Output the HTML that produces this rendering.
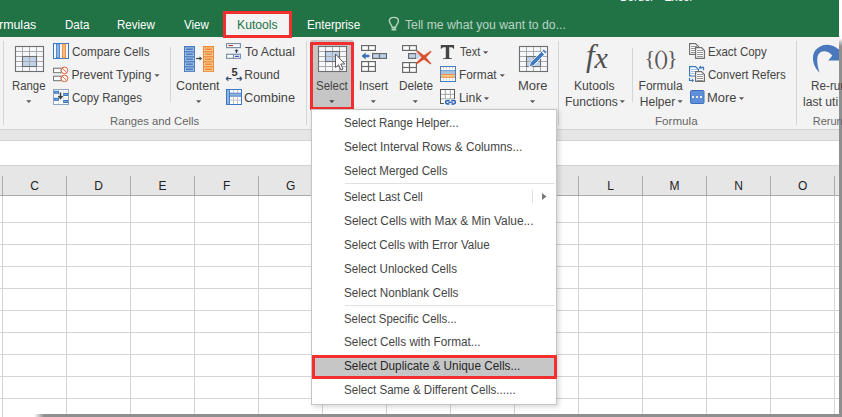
<!DOCTYPE html>
<html><head><meta charset="utf-8">
<style>
*{margin:0;padding:0;box-sizing:border-box}
html,body{width:842px;height:417px;overflow:hidden;background:#fff;font-family:"Liberation Sans",sans-serif}
.t{position:absolute;white-space:nowrap;line-height:1;transform-origin:0 0}
.b{position:absolute}
svg{position:absolute;overflow:visible}

</style></head><body>
<div class="b" style="left:0;top:0;width:839px;height:37px;background:#217346"></div>
<div class="b" style="left:839px;top:0;width:3px;height:417px;background:linear-gradient(#fff 0,#fff 38px,#8f8f8f 46px,#8f8f8f 100%)"></div>
<div class="b" style="left:223px;top:11px;width:69px;height:27px;background:#f3f3f3;border:3px solid #f32e2e;z-index:3"></div>
<div class="b" style="left:0;top:37px;width:839px;height:93px;background:#f3f3f3;border-bottom:1px solid #d2d2d2"></div>
<div class="b" style="left:0;top:130px;width:839px;height:11px;background:#e6e6e6;border-bottom:1px solid #d2d2d2"></div>
<div class="b" style="left:0;top:141px;width:839px;height:25px;background:#fff;border-bottom:1px solid #d2d2d2"></div>
<div class="b" style="left:0;top:166px;width:839px;height:30px;background:#e6e6e6;border-bottom:1px solid #ababab"></div>
<div class="b" style="left:2px;top:176px;width:1px;height:20px;background:#ababab"></div>
<div class="b" style="left:2px;top:196px;width:1px;height:221px;background:#d4d4d4"></div>
<div class="b" style="left:66px;top:176px;width:1px;height:20px;background:#ababab"></div>
<div class="b" style="left:66px;top:196px;width:1px;height:221px;background:#d4d4d4"></div>
<div class="b" style="left:130px;top:176px;width:1px;height:20px;background:#ababab"></div>
<div class="b" style="left:130px;top:196px;width:1px;height:221px;background:#d4d4d4"></div>
<div class="b" style="left:194px;top:176px;width:1px;height:20px;background:#ababab"></div>
<div class="b" style="left:194px;top:196px;width:1px;height:221px;background:#d4d4d4"></div>
<div class="b" style="left:258px;top:176px;width:1px;height:20px;background:#ababab"></div>
<div class="b" style="left:258px;top:196px;width:1px;height:221px;background:#d4d4d4"></div>
<div class="b" style="left:322px;top:176px;width:1px;height:20px;background:#ababab"></div>
<div class="b" style="left:322px;top:196px;width:1px;height:221px;background:#d4d4d4"></div>
<div class="b" style="left:386px;top:176px;width:1px;height:20px;background:#ababab"></div>
<div class="b" style="left:386px;top:196px;width:1px;height:221px;background:#d4d4d4"></div>
<div class="b" style="left:450px;top:176px;width:1px;height:20px;background:#ababab"></div>
<div class="b" style="left:450px;top:196px;width:1px;height:221px;background:#d4d4d4"></div>
<div class="b" style="left:514px;top:176px;width:1px;height:20px;background:#ababab"></div>
<div class="b" style="left:514px;top:196px;width:1px;height:221px;background:#d4d4d4"></div>
<div class="b" style="left:578px;top:176px;width:1px;height:20px;background:#ababab"></div>
<div class="b" style="left:578px;top:196px;width:1px;height:221px;background:#d4d4d4"></div>
<div class="b" style="left:642px;top:176px;width:1px;height:20px;background:#ababab"></div>
<div class="b" style="left:642px;top:196px;width:1px;height:221px;background:#d4d4d4"></div>
<div class="b" style="left:706px;top:176px;width:1px;height:20px;background:#ababab"></div>
<div class="b" style="left:706px;top:196px;width:1px;height:221px;background:#d4d4d4"></div>
<div class="b" style="left:770px;top:176px;width:1px;height:20px;background:#ababab"></div>
<div class="b" style="left:770px;top:196px;width:1px;height:221px;background:#d4d4d4"></div>
<div class="b" style="left:834px;top:176px;width:1px;height:20px;background:#ababab"></div>
<div class="b" style="left:834px;top:196px;width:1px;height:221px;background:#d4d4d4"></div>
<div class="b" style="left:0;top:222px;width:839px;height:1px;background:#d4d4d4"></div>
<div class="b" style="left:0;top:244px;width:839px;height:1px;background:#d4d4d4"></div>
<div class="b" style="left:0;top:266px;width:839px;height:1px;background:#d4d4d4"></div>
<div class="b" style="left:0;top:288px;width:839px;height:1px;background:#d4d4d4"></div>
<div class="b" style="left:0;top:310px;width:839px;height:1px;background:#d4d4d4"></div>
<div class="b" style="left:0;top:332px;width:839px;height:1px;background:#d4d4d4"></div>
<div class="b" style="left:0;top:354px;width:839px;height:1px;background:#d4d4d4"></div>
<div class="b" style="left:0;top:376px;width:839px;height:1px;background:#d4d4d4"></div>
<div class="b" style="left:0;top:398px;width:839px;height:1px;background:#d4d4d4"></div>
<div class="b" style="left:3px;top:41px;width:1px;height:84px;background:#d5d5d5"></div>
<div class="b" style="left:170px;top:47px;width:1px;height:55px;background:#d5d5d5"></div>
<div class="b" style="left:306px;top:41px;width:1px;height:84px;background:#d5d5d5"></div>
<div class="b" style="left:558px;top:41px;width:1px;height:84px;background:#d5d5d5"></div>
<div class="b" style="left:796px;top:41px;width:1px;height:84px;background:#d5d5d5"></div>
<div class="b" style="left:632px;top:48px;width:1px;height:54px;background:#d5d5d5"></div>
<div class="b" style="left:34px;top:414px;width:808px;height:3px;background:linear-gradient(90deg,rgba(143,143,143,0) 0,#8f8f8f 10px)"></div>
<div class="b" style="left:311px;top:40px;width:42px;height:70px;background:#c6c6c6"></div>
<div class="b" style="left:310px;top:42px;width:44px;height:68px;border:3px solid #f32e2e"></div>
<svg style="left:0;top:0;z-index:1" width="842" height="417" viewBox="0 0 842 417">
<rect x="15.5" y="46.5" width="28" height="25" fill="#f6f8fc" stroke="#6e6e6e" stroke-width="1.1"/>
<rect x="22.5" y="56.5" width="14" height="10" fill="#bfd4ec"/>
<line x1="22.5" y1="47" x2="22.5" y2="71" stroke="#aaaaaa" stroke-width="1"/>
<line x1="29.5" y1="47" x2="29.5" y2="71" stroke="#aaaaaa" stroke-width="1"/>
<line x1="36.5" y1="47" x2="36.5" y2="71" stroke="#aaaaaa" stroke-width="1"/>
<line x1="16" y1="51.5" x2="43" y2="51.5" stroke="#aaaaaa" stroke-width="1"/>
<line x1="16" y1="56.5" x2="43" y2="56.5" stroke="#aaaaaa" stroke-width="1"/>
<line x1="16" y1="61.5" x2="43" y2="61.5" stroke="#aaaaaa" stroke-width="1"/>
<line x1="16" y1="66.5" x2="43" y2="66.5" stroke="#aaaaaa" stroke-width="1"/>
<rect x="22.5" y="56.5" width="14" height="10" fill="none" stroke="#6e6e6e" stroke-width="1.1"/>
<rect x="318.5" y="46.5" width="28" height="25" fill="#f6f8fc" stroke="#6e6e6e" stroke-width="1.1"/>
<rect x="325.5" y="51.5" width="14" height="10" fill="#bfd4ec"/>
<line x1="325.5" y1="47" x2="325.5" y2="71" stroke="#aaaaaa" stroke-width="1"/>
<line x1="332.5" y1="47" x2="332.5" y2="71" stroke="#aaaaaa" stroke-width="1"/>
<line x1="339.5" y1="47" x2="339.5" y2="71" stroke="#aaaaaa" stroke-width="1"/>
<line x1="319" y1="51.5" x2="346" y2="51.5" stroke="#aaaaaa" stroke-width="1"/>
<line x1="319" y1="56.5" x2="346" y2="56.5" stroke="#aaaaaa" stroke-width="1"/>
<line x1="319" y1="61.5" x2="346" y2="61.5" stroke="#aaaaaa" stroke-width="1"/>
<line x1="319" y1="66.5" x2="346" y2="66.5" stroke="#aaaaaa" stroke-width="1"/>
<rect x="325.5" y="51.5" width="14" height="10" fill="none" stroke="#6e6e6e" stroke-width="1.1"/>
<path d="M335.5,54 L335.5,67.5 L338.6,64.8 L340.9,70 L343,69.1 L340.8,64 L344.8,64 Z" fill="#fff" stroke="#5a5a5a" stroke-width="1" stroke-linejoin="round"/>
<rect x="519.5" y="46.5" width="28" height="25" fill="#f6f8fc" stroke="#6e6e6e" stroke-width="1.1"/>
<rect x="526.5" y="56.5" width="14" height="10" fill="#bfd4ec"/>
<line x1="526.5" y1="47" x2="526.5" y2="71" stroke="#aaaaaa" stroke-width="1"/>
<line x1="533.5" y1="47" x2="533.5" y2="71" stroke="#aaaaaa" stroke-width="1"/>
<line x1="540.5" y1="47" x2="540.5" y2="71" stroke="#aaaaaa" stroke-width="1"/>
<line x1="520" y1="51.5" x2="547" y2="51.5" stroke="#aaaaaa" stroke-width="1"/>
<line x1="520" y1="56.5" x2="547" y2="56.5" stroke="#aaaaaa" stroke-width="1"/>
<line x1="520" y1="61.5" x2="547" y2="61.5" stroke="#aaaaaa" stroke-width="1"/>
<line x1="520" y1="66.5" x2="547" y2="66.5" stroke="#aaaaaa" stroke-width="1"/>
<rect x="526.5" y="56.5" width="14" height="10" fill="none" stroke="#6e6e6e" stroke-width="1.1"/>
<path d="M529,67 L530.5,62.5 L541.5,51.5 L544.5,54.5 L533.5,65.5 Z" fill="#3f7cc4" stroke="#fff" stroke-width="0.8"/>
<path d="M542.3,50.7 L543.8,49.2 L546.8,52.2 L545.3,53.7 Z" fill="#3f7cc4" stroke="#fff" stroke-width="0.6"/>
<rect x="184" y="46" width="11" height="26" fill="#4a7cc0"/>
<rect x="185.6" y="47.90" width="7.8" height="2.7" fill="none" stroke="#a5c4e8" stroke-width="1"/>
<rect x="185.6" y="52.92" width="7.8" height="2.7" fill="none" stroke="#a5c4e8" stroke-width="1"/>
<rect x="185.6" y="57.94" width="7.8" height="2.7" fill="none" stroke="#a5c4e8" stroke-width="1"/>
<rect x="185.6" y="62.96" width="7.8" height="2.7" fill="none" stroke="#a5c4e8" stroke-width="1"/>
<rect x="185.6" y="67.98" width="7.8" height="2.7" fill="none" stroke="#a5c4e8" stroke-width="1"/>
<rect x="203" y="46" width="11" height="26" fill="#ee8a3c"/>
<rect x="204.6" y="47.90" width="7.8" height="2.7" fill="none" stroke="#f8cf95" stroke-width="1"/>
<rect x="204.6" y="52.92" width="7.8" height="2.7" fill="none" stroke="#f8cf95" stroke-width="1"/>
<rect x="204.6" y="57.94" width="7.8" height="2.7" fill="none" stroke="#f8cf95" stroke-width="1"/>
<rect x="204.6" y="62.96" width="7.8" height="2.7" fill="none" stroke="#f8cf95" stroke-width="1"/>
<rect x="204.6" y="67.98" width="7.8" height="2.7" fill="none" stroke="#f8cf95" stroke-width="1"/>
<path d="M196,58.5 L201,58.5" stroke="#444" stroke-width="1.2"/><path d="M199.5,56.5 L202.2,58.5 L199.5,60.5 Z" fill="#444"/>
<rect x="361.6" y="45.6" width="13.8" height="4.8" fill="#fff" stroke="#6a6a6a" stroke-width="1.2"/>
<line x1="368.5" y1="45" x2="368.5" y2="51" stroke="#6a6a6a" stroke-width="1.2"/>
<rect x="372.6" y="53.6" width="13.8" height="4.8" fill="#bfd4ec" stroke="#6a6a6a" stroke-width="1.2"/>
<line x1="379.5" y1="53" x2="379.5" y2="59" stroke="#6a6a6a" stroke-width="1.2"/>
<rect x="361.6" y="61.6" width="13.8" height="9.8" fill="#fff" stroke="#6a6a6a" stroke-width="1.2"/>
<line x1="368.5" y1="61" x2="368.5" y2="72" stroke="#6a6a6a" stroke-width="1.2"/>
<line x1="361" y1="66.5" x2="376" y2="66.5" stroke="#6a6a6a" stroke-width="1.2"/>
<path d="M361.6,56 L365.6,52.6 L365.6,54.7 L369.4,54.7 L369.4,57.3 L365.6,57.3 L365.6,59.4 Z" fill="#3a70b8"/>
<rect x="402.6" y="45.6" width="13.8" height="4.8" fill="#fff" stroke="#6a6a6a" stroke-width="1.2"/>
<line x1="409.5" y1="45" x2="409.5" y2="51" stroke="#6a6a6a" stroke-width="1.2"/>
<rect x="408.6" y="53.6" width="7.3" height="4.8" fill="#bfd4ec" stroke="#6a6a6a" stroke-width="1.2"/>
<path d="M416,53.6 L418.5,53.6 L421,56 L418.5,58.4 L416,58.4 Z" fill="#c3d7ee"/>
<rect x="402.6" y="62.6" width="13.8" height="9.8" fill="#fff" stroke="#6a6a6a" stroke-width="1.2"/>
<line x1="409.5" y1="62" x2="409.5" y2="73" stroke="#6a6a6a" stroke-width="1.2"/>
<line x1="402" y1="67.5" x2="417" y2="67.5" stroke="#6a6a6a" stroke-width="1.2"/>
<path d="M416.45,51.58 L422.81,58.62 L430.39,64.34 L431.21,63.46 L424.99,56.28 L417.55,50.42 Z" fill="#d9502e" stroke="#d9502e" stroke-width="0.3" stroke-linejoin="round"/>
<path d="M430.61,50.94 L422.77,56.23 L416.09,62.89 L417.11,64.11 L424.83,58.67 L431.39,51.86 Z" fill="#d9502e" stroke="#d9502e" stroke-width="0.3" stroke-linejoin="round"/>
<path d="M440.8,45 H454.1 V48.7 H453.3 Q452.7,47.3 451,47.3 H449.2 V57.4 Q449.2,58.2 452,58.3 V59 H443 V58.3 Q445.8,58.2 445.8,57.4 V47.3 H444 Q442.3,47.3 441.6,48.7 H440.8 Z" fill="#444"/>
<rect x="440.5" y="66.5" width="15" height="15" fill="#fff" stroke="#4a7cc0" stroke-width="1"/>
<rect x="441" y="70.4" width="14" height="3.4" fill="#9dc3e6"/><line x1="441" y1="70.6" x2="455" y2="70.6" stroke="#4a7cc0" stroke-width="0.7"/>
<rect x="441" y="74" width="14" height="3.6" fill="#f8cb8c"/><line x1="441" y1="74.4" x2="455" y2="74.4" stroke="#ed7d31" stroke-width="0.9"/><line x1="441" y1="77.2" x2="455" y2="77.2" stroke="#ed7d31" stroke-width="0.9"/>
<line x1="443.5" y1="67" x2="443.5" y2="70.2" stroke="#b0a8a0" stroke-width="0.8" stroke-dasharray="0.8,0.7"/>
<line x1="443.5" y1="77.6" x2="443.5" y2="81" stroke="#b0a8a0" stroke-width="0.8" stroke-dasharray="0.8,0.7"/>
<line x1="446.5" y1="67" x2="446.5" y2="70.2" stroke="#b0a8a0" stroke-width="0.8" stroke-dasharray="0.8,0.7"/>
<line x1="446.5" y1="77.6" x2="446.5" y2="81" stroke="#b0a8a0" stroke-width="0.8" stroke-dasharray="0.8,0.7"/>
<line x1="449.5" y1="67" x2="449.5" y2="70.2" stroke="#b0a8a0" stroke-width="0.8" stroke-dasharray="0.8,0.7"/>
<line x1="449.5" y1="77.6" x2="449.5" y2="81" stroke="#b0a8a0" stroke-width="0.8" stroke-dasharray="0.8,0.7"/>
<line x1="452.5" y1="67" x2="452.5" y2="70.2" stroke="#b0a8a0" stroke-width="0.8" stroke-dasharray="0.8,0.7"/>
<line x1="452.5" y1="77.6" x2="452.5" y2="81" stroke="#b0a8a0" stroke-width="0.8" stroke-dasharray="0.8,0.7"/>
<rect x="440.5" y="89.5" width="14" height="14" fill="#fff" stroke="#5a5a5a" stroke-width="1"/>
<path d="M445.3,90 V103 M450.3,90 V103 M441,94.3 H454 M441,98.9 H454" stroke="#9a9a9a" stroke-width="0.9" fill="none"/>
<rect x="444" y="99.2" width="13" height="6.2" fill="#f3f3f3"/>
<path d="M449.6,100.6 H447.3 A1.65,1.65 0 0 0 447.3,103.9 H449.4" stroke="#1f5fb4" stroke-width="1.5" fill="none"/>
<path d="M451.4,100.6 H453.7 A1.65,1.65 0 0 1 453.7,103.9 H451.4" stroke="#1f5fb4" stroke-width="1.5" fill="none"/>
<path d="M448.3,102.25 H452.7" stroke="#1f5fb4" stroke-width="1.3" fill="none"/>
<text x="586" y="66" font-family="Liberation Serif" font-style="italic" font-size="31" fill="#505050">f</text>
<text x="594.6" y="67.6" font-family="Liberation Serif" font-style="italic" font-size="30" fill="#505050">x</text>
<text x="644.6" y="64.6" font-family="Liberation Serif" font-size="22" fill="#585858" letter-spacing="-0.9">{()}</text>
<path d="M689.6,43.6 H695.5 L698.4,46.5 V54.4 H689.6 Z" fill="#fff" stroke="#707070" stroke-width="1.2"/>
<line x1="691" y1="46.5" x2="697" y2="46.5" stroke="#8a8a8a" stroke-width="0.9"/>
<line x1="691" y1="48.5" x2="697" y2="48.5" stroke="#8a8a8a" stroke-width="0.9"/>
<line x1="691" y1="50.5" x2="697" y2="50.5" stroke="#8a8a8a" stroke-width="0.9"/>
<line x1="691" y1="52.5" x2="697" y2="52.5" stroke="#8a8a8a" stroke-width="0.9"/>
<path d="M695.6,47.6 H701.5 L704.4,50.5 V58.4 H695.6 Z" fill="#fff" stroke="#707070" stroke-width="1.2"/>
<line x1="697" y1="50.5" x2="703" y2="50.5" stroke="#8a8a8a" stroke-width="0.9"/>
<line x1="697" y1="52.5" x2="703" y2="52.5" stroke="#8a8a8a" stroke-width="0.9"/>
<line x1="697" y1="54.5" x2="703" y2="54.5" stroke="#8a8a8a" stroke-width="0.9"/>
<line x1="697" y1="56.5" x2="703" y2="56.5" stroke="#8a8a8a" stroke-width="0.9"/>
<path d="M689.6,66.6 H695.5 L698.4,69.5 V75.9 H689.6 Z" fill="#fff" stroke="#3a78c2" stroke-width="1.2"/>
<line x1="691" y1="69.5" x2="697" y2="69.5" stroke="#9dbbe0" stroke-width="0.9"/>
<line x1="691" y1="71.5" x2="697" y2="71.5" stroke="#9dbbe0" stroke-width="0.9"/>
<line x1="691" y1="73.5" x2="697" y2="73.5" stroke="#9dbbe0" stroke-width="0.9"/>
<line x1="691" y1="75.5" x2="697" y2="75.5" stroke="#9dbbe0" stroke-width="0.9"/>
<path d="M695.6,71.6 H701.5 L704.4,74.5 V81.4 H695.6 Z" fill="#fff" stroke="#707070" stroke-width="1.2"/>
<line x1="697" y1="74.5" x2="703" y2="74.5" stroke="#8a8a8a" stroke-width="0.9"/>
<line x1="697" y1="76.5" x2="703" y2="76.5" stroke="#8a8a8a" stroke-width="0.9"/>
<line x1="697" y1="78.5" x2="703" y2="78.5" stroke="#8a8a8a" stroke-width="0.9"/>
<line x1="697" y1="80.5" x2="703" y2="80.5" stroke="#8a8a8a" stroke-width="0.9"/>
<path d="M700.3,68.5 V67.3 H703.5 V70.3" stroke="#3a78c2" stroke-width="1.2" fill="none"/><path d="M698.6,68.6 L702,68.6 L700.3,65.6 Z" fill="#3a78c2"/>
<path d="M689.5,78 L689.5,80.5 L692.5,80.5" stroke="#3a78c2" stroke-width="1.2" fill="none"/><path d="M692,78.5 L694,80.5 L692,82.5 Z" fill="#3a78c2"/>
<rect x="690.5" y="90.5" width="13.5" height="13" rx="1" fill="#5e8fd8" stroke="#3c6fc0" stroke-width="1"/>
<rect x="692" y="96" width="2" height="2" fill="#f2e8d8"/>
<rect x="696" y="96" width="2" height="2" fill="#f2e8d8"/>
<rect x="700" y="96" width="2" height="2" fill="#f2e8d8"/>
<path d="M819.6,72.7 C812.5,66 811,56 815.5,50 C820,44.5 829,42.5 836,47.5 L839,49.5 L839,60.4 L828.2,60.4 L832.4,55.6 C828.3,50.3 821,49.6 818.3,54.6 C816.4,58.6 817.3,66 819.6,72.7 Z" fill="#4a78bd"/>
<rect x="53.5" y="43.5" width="15" height="15" fill="#fff" stroke="#3c78c8" stroke-width="1"/>
<rect x="56.5" y="44" width="3" height="14" fill="#8fb4de" stroke="#3c78c8" stroke-width="0.8"/>
<rect x="62.5" y="44" width="3" height="14" fill="#f0c080" stroke="#ed7d31" stroke-width="0.8"/>
<line x1="55" y1="44" x2="55" y2="58" stroke="#d0d8e8" stroke-width="0.8" stroke-dasharray="1,1"/>
<line x1="61" y1="44" x2="61" y2="58" stroke="#d0d8e8" stroke-width="0.8" stroke-dasharray="1,1"/>
<line x1="67" y1="44" x2="67" y2="58" stroke="#d0d8e8" stroke-width="0.8" stroke-dasharray="1,1"/>
<rect x="53.6" y="68.2" width="7.6" height="4.5" fill="#fff" stroke="#6e6e6e" stroke-width="1"/>
<circle cx="64.5" cy="70.4" r="3.3" fill="#fff" stroke="#e05a30" stroke-width="0.95"/>
<line x1="62.2" y1="68.10000000000001" x2="66.8" y2="72.7" stroke="#e05a30" stroke-width="0.9"/>
<rect x="53.6" y="76.2" width="7.6" height="4.5" fill="#fff" stroke="#6e6e6e" stroke-width="1"/>
<circle cx="64.5" cy="78.4" r="3.3" fill="#fff" stroke="#e05a30" stroke-width="0.95"/>
<line x1="62.2" y1="76.10000000000001" x2="66.8" y2="80.7" stroke="#e05a30" stroke-width="0.9"/>
<rect x="53.5" y="89.5" width="15" height="15" fill="#fff" stroke="#8da3c0" stroke-width="1"/>
<line x1="58.5" y1="90" x2="58.5" y2="104" stroke="#dcdcdc" stroke-width="0.8"/>
<line x1="63.5" y1="90" x2="63.5" y2="104" stroke="#dcdcdc" stroke-width="0.8"/>
<line x1="54" y1="92" x2="68" y2="92" stroke="#e4e4e4" stroke-width="0.8"/>
<line x1="54" y1="95" x2="68" y2="95" stroke="#e4e4e4" stroke-width="0.8"/>
<line x1="54" y1="98" x2="68" y2="98" stroke="#e4e4e4" stroke-width="0.8"/>
<line x1="54" y1="101" x2="68" y2="101" stroke="#e4e4e4" stroke-width="0.8"/>
<rect x="54" y="90.8" width="5" height="3" fill="#3a78c8"/><line x1="55" y1="92.3" x2="58" y2="92.3" stroke="#9cc2ee" stroke-width="0.7"/>
<rect x="54" y="97.8" width="5" height="3" fill="#3a78c8"/><line x1="55" y1="99.3" x2="58" y2="99.3" stroke="#9cc2ee" stroke-width="0.7"/>
<rect x="63.2" y="93" width="5" height="3" fill="#3a78c8"/><line x1="64.2" y1="94.5" x2="67.2" y2="94.5" stroke="#9cc2ee" stroke-width="0.7"/>
<rect x="63.2" y="100" width="5" height="3" fill="#3a78c8"/><line x1="64.2" y1="101.5" x2="67.2" y2="101.5" stroke="#9cc2ee" stroke-width="0.7"/>
<path d="M60.5,92.5 V97.5" stroke="#444" stroke-width="1.6"/><path d="M57.7,96 L63.3,96 L60.5,99.8 Z" fill="#444"/>
<rect x="226.6" y="43.6" width="13.8" height="4" fill="#fff" stroke="#7a8fa8" stroke-width="1.2"/>
<line x1="228.5" y1="45.6" x2="233" y2="45.6" stroke="#c0302a" stroke-width="1.1"/>
<rect x="226.6" y="54.3" width="13.8" height="4" fill="#fff" stroke="#7a8fa8" stroke-width="1.2"/>
<line x1="233.5" y1="54" x2="233.5" y2="58.5" stroke="#7a8fa8" stroke-width="1"/>
<line x1="234.8" y1="56.3" x2="239" y2="56.3" stroke="#2030d0" stroke-width="1.1"/>
<path d="M236.5,49 L238.6,51.3 L237.1,51.3 L237.1,53 L235.9,53 L235.9,51.3 L234.4,51.3 Z" fill="#2c3e5a"/>
<text x="231.5" y="75.8" font-family="Liberation Sans" font-weight="bold" font-size="11" fill="#333">5</text>
<path d="M226.5,78.6 H231.5 M236.5,78.6 H241.5" stroke="#2e4a6e" stroke-width="1.1"/>
<path d="M226,78.6 L228.3,76.6 M226,78.6 L228.3,80.6 M242,78.6 L239.7,76.6 M242,78.6 L239.7,80.6" stroke="#2e4a6e" stroke-width="1.1"/>
<rect x="226.5" y="89.5" width="15" height="15" fill="#fff" stroke="#3c78c8" stroke-width="1"/>
<rect x="227" y="90" width="2.5" height="14" fill="#8fb4de"/>
<rect x="229.5" y="93.2" width="11.5" height="3" fill="#8fb4de"/>
<path d="M229.5,90 V104 M229.5,93.2 H241 M229.5,96.2 H241" stroke="#3c78c8" stroke-width="0.9"/>
<path d="M233.5,90 V93 M237.5,90 V93 M233.5,96.5 V104 M237.5,96.5 V104 M230,100.2 H241" stroke="#b8b8b8" stroke-width="0.8"/>
<path d="M392.2,27.2 C391.5,24.8 389.4,23.2 389.4,20.9 C389.4,18.6 391.4,17.4 393.9,17.4 C396.4,17.4 398.4,18.6 398.4,20.9 C398.4,23.2 396.3,24.8 395.6,27.2 Z" fill="none" stroke="#b8d3c2" stroke-width="1.4"/>
<rect x="391.6" y="28.3" width="4.6" height="2.2" fill="#b8d3c2"/>
<path d="M26.2,100.2 L31.400000000000002,100.2 L28.8,103.0 Z" fill="#585858"/>
<path d="M154.4,74.2 L159.6,74.2 L157,77.0 Z" fill="#585858"/>
<path d="M196.1,100.2 L201.29999999999998,100.2 L198.7,103.0 Z" fill="#585858"/>
<path d="M329.2,100.2 L334.40000000000003,100.2 L331.8,103.0 Z" fill="#404040"/>
<path d="M370.7,100.2 L375.90000000000003,100.2 L373.3,103.0 Z" fill="#585858"/>
<path d="M412.7,100.2 L417.90000000000003,100.2 L415.3,103.0 Z" fill="#585858"/>
<path d="M483.0,51.2 L488.20000000000005,51.2 L485.6,54.0 Z" fill="#585858"/>
<path d="M499.7,74.2 L504.90000000000003,74.2 L502.3,77.0 Z" fill="#585858"/>
<path d="M483.9,97.2 L489.1,97.2 L486.5,100.0 Z" fill="#585858"/>
<path d="M529.9,100.2 L535.1,100.2 L532.5,103.0 Z" fill="#585858"/>
<path d="M619.6999999999999,100.2 L624.9,100.2 L622.3,103.0 Z" fill="#585858"/>
<path d="M677.5,100.2 L682.7,100.2 L680.1,103.0 Z" fill="#585858"/>
<path d="M738.9,97.2 L744.1,97.2 L741.5,100.0 Z" fill="#585858"/>
</svg>
<div class="t" style="left:620.05px;top:-8.66px;font-size:12px;color:#fff;transform:scaleX(0.9459)">Border - Excel</div>
<div class="t" style="left:-1.03px;top:18.54px;font-size:12px;color:#fff;transform:scaleX(1.0343)">rmulas</div>
<div class="t" style="left:64.74px;top:18.54px;font-size:12px;color:#fff;transform:scaleX(0.9625)">Data</div>
<div class="t" style="left:117.34px;top:18.54px;font-size:12px;color:#fff;transform:scaleX(0.9632)">Review</div>
<div class="t" style="left:184.00px;top:18.54px;font-size:12px;color:#fff;transform:scaleX(0.9615)">View</div>
<div class="t" style="left:237.38px;top:18.54px;font-size:12px;color:#217346;transform:scaleX(1.0154);z-index:4">Kutools</div>
<div class="t" style="left:306.53px;top:18.54px;font-size:12px;color:#fff;transform:scaleX(0.9717)">Enterprise</div>
<div class="t" style="left:405.30px;top:18.64px;font-size:12px;color:#bcd3c4;transform:scaleX(1.0172)">Tell me what you want to do...</div>
<div class="t" style="left:11.75px;top:79.74px;font-size:12px;color:#444;transform:scaleX(0.9471)">Range</div>
<div class="t" style="left:71.52px;top:45.64px;font-size:12px;color:#444;transform:scaleX(0.9769)">Compare Cells</div>
<div class="t" style="left:71.50px;top:68.94px;font-size:12px;color:#444">Prevent Typing</div>
<div class="t" style="left:71.54px;top:91.54px;font-size:12px;color:#444;transform:scaleX(0.9620)">Copy Ranges</div>
<div class="t" style="left:176.36px;top:79.64px;font-size:12px;color:#444;transform:scaleX(1.0366)">Content</div>
<div class="t" style="left:245.30px;top:45.64px;font-size:12px;color:#444;transform:scaleX(1.0250)">To Actual</div>
<div class="t" style="left:244.30px;top:68.84px;font-size:12px;color:#444">Round</div>
<div class="t" style="left:244.24px;top:91.74px;font-size:12px;color:#444;transform:scaleX(1.0630)">Combine</div>
<div class="t" style="left:315.85px;top:79.54px;font-size:12px;color:#444;transform:scaleX(0.9531)">Select</div>
<div class="t" style="left:358.53px;top:79.64px;font-size:12px;color:#444;transform:scaleX(0.9690)">Insert</div>
<div class="t" style="left:398.72px;top:79.64px;font-size:12px;color:#444;transform:scaleX(0.9788)">Delete</div>
<div class="t" style="left:459.80px;top:45.54px;font-size:12px;color:#444;transform:scaleX(0.9182)">Text</div>
<div class="t" style="left:458.81px;top:68.84px;font-size:12px;color:#444;transform:scaleX(0.9892)">Format</div>
<div class="t" style="left:458.78px;top:91.54px;font-size:12px;color:#444;transform:scaleX(1.0238)">Link</div>
<div class="t" style="left:518.42px;top:79.64px;font-size:12px;color:#444;transform:scaleX(1.0808)">More</div>
<div class="t" style="left:574.49px;top:79.64px;font-size:12px;color:#444;transform:scaleX(1.0128)">Kutools</div>
<div class="t" style="left:564.89px;top:95.74px;font-size:12px;color:#444;transform:scaleX(1.0137)">Functions</div>
<div class="t" style="left:638.60px;top:79.64px;font-size:12px;color:#444">Formula</div>
<div class="t" style="left:639.80px;top:95.74px;font-size:12px;color:#444">Helper</div>
<div class="t" style="left:707.54px;top:45.64px;font-size:12px;color:#444;transform:scaleX(0.9567)">Exact Copy</div>
<div class="t" style="left:707.54px;top:68.84px;font-size:12px;color:#444;transform:scaleX(0.9633)">Convert Refers</div>
<div class="t" style="left:707.42px;top:91.54px;font-size:12px;color:#444;transform:scaleX(1.0769)">More</div>
<div class="t" style="left:810.62px;top:79.64px;font-size:12px;color:#444;transform:scaleX(0.9771)">Re-run</div>
<div class="t" style="left:802.79px;top:95.74px;font-size:12px;color:#444;transform:scaleX(1.0121)">last uti</div>
<div class="t" style="left:110.27px;top:115.69px;font-size:11px;color:#666;transform:scaleX(1.0259)">Ranges and Cells</div>
<div class="t" style="left:655.44px;top:115.69px;font-size:11px;color:#666;transform:scaleX(1.0564)">Formula</div>
<div class="t" style="left:812.70px;top:115.69px;font-size:11px;color:#666">Rerun</div>
<div class="t" style="left:30.26px;top:180.04px;font-size:12px;color:#222">C</div>
<div class="t" style="left:94.26px;top:180.04px;font-size:12px;color:#222">D</div>
<div class="t" style="left:158.59px;top:180.04px;font-size:12px;color:#222">E</div>
<div class="t" style="left:222.93px;top:180.04px;font-size:12px;color:#222">F</div>
<div class="t" style="left:285.93px;top:180.04px;font-size:12px;color:#222">G</div>
<div class="t" style="left:350.26px;top:180.04px;font-size:12px;color:#222">H</div>
<div class="t" style="left:416.93px;top:180.04px;font-size:12px;color:#222">I</div>
<div class="t" style="left:479.60px;top:180.04px;font-size:12px;color:#222">J</div>
<div class="t" style="left:542.59px;top:180.04px;font-size:12px;color:#222">K</div>
<div class="t" style="left:607.26px;top:180.04px;font-size:12px;color:#222">L</div>
<div class="t" style="left:669.60px;top:180.04px;font-size:12px;color:#222">M</div>
<div class="t" style="left:734.26px;top:180.04px;font-size:12px;color:#222">N</div>
<div class="t" style="left:797.93px;top:180.04px;font-size:12px;color:#222">O</div>
<div class="t" style="left:343.95px;top:116.84px;font-size:12px;color:#444;transform:scaleX(0.9542);z-index:12">Select Range Helper...</div>
<div class="t" style="left:343.92px;top:140.84px;font-size:12px;color:#444;transform:scaleX(0.9827);z-index:12">Select Interval Rows &amp; Columns...</div>
<div class="t" style="left:343.94px;top:164.84px;font-size:12px;color:#444;transform:scaleX(0.9632);z-index:12">Select Merged Cells</div>
<div class="t" style="left:343.95px;top:190.84px;font-size:12px;color:#444;transform:scaleX(0.9451);z-index:12">Select Last Cell</div>
<div class="t" style="left:343.91px;top:214.84px;font-size:12px;color:#444;transform:scaleX(0.9910);z-index:12">Select Cells with Max &amp; Min Value...</div>
<div class="t" style="left:343.94px;top:238.84px;font-size:12px;color:#444;transform:scaleX(0.9633);z-index:12">Select Cells with Error Value</div>
<div class="t" style="left:343.93px;top:262.84px;font-size:12px;color:#444;transform:scaleX(0.9678);z-index:12">Select Unlocked Cells</div>
<div class="t" style="left:343.92px;top:286.84px;font-size:12px;color:#444;transform:scaleX(0.9750);z-index:12">Select Nonblank Cells</div>
<div class="t" style="left:343.95px;top:312.84px;font-size:12px;color:#444;transform:scaleX(0.9496);z-index:12">Select Specific Cells...</div>
<div class="t" style="left:343.92px;top:336.34px;font-size:12px;color:#444;transform:scaleX(0.9803);z-index:12">Select Cells with Format...</div>
<div class="t" style="left:343.92px;top:359.84px;font-size:12px;color:#262626;transform:scaleX(0.9825);z-index:12">Select Duplicate &amp; Unique Cells...</div>
<div class="t" style="left:343.93px;top:384.14px;font-size:12px;color:#444;transform:scaleX(0.9653);z-index:12">Select Same &amp; Different Cells......</div>
<div class="b" style="z-index:10;left:311px;top:109px;width:246px;height:296px;background:#fff;border:1px solid #c6c6c6;box-shadow:2px 2px 5px rgba(0,0,0,.16)"></div>
<div class="b" style="z-index:11;left:345px;top:183px;width:210px;height:1px;background:#e1e1e1"></div>
<div class="b" style="z-index:11;left:345px;top:305px;width:210px;height:1px;background:#e1e1e1"></div>
<div class="b" style="z-index:11;left:532px;top:190px;width:1px;height:13px;background:#e1e1e1"></div>
<svg style="z-index:11;left:0;top:0" width="842" height="417"><path d="M542 193 L546.5 196.5 L542 200 Z" fill="#777"/></svg>
<div class="b" style="z-index:11;left:312px;top:355px;width:245px;height:24px;background:#c6c6c6;border:3px solid #f32e2e"></div>
</body></html>
